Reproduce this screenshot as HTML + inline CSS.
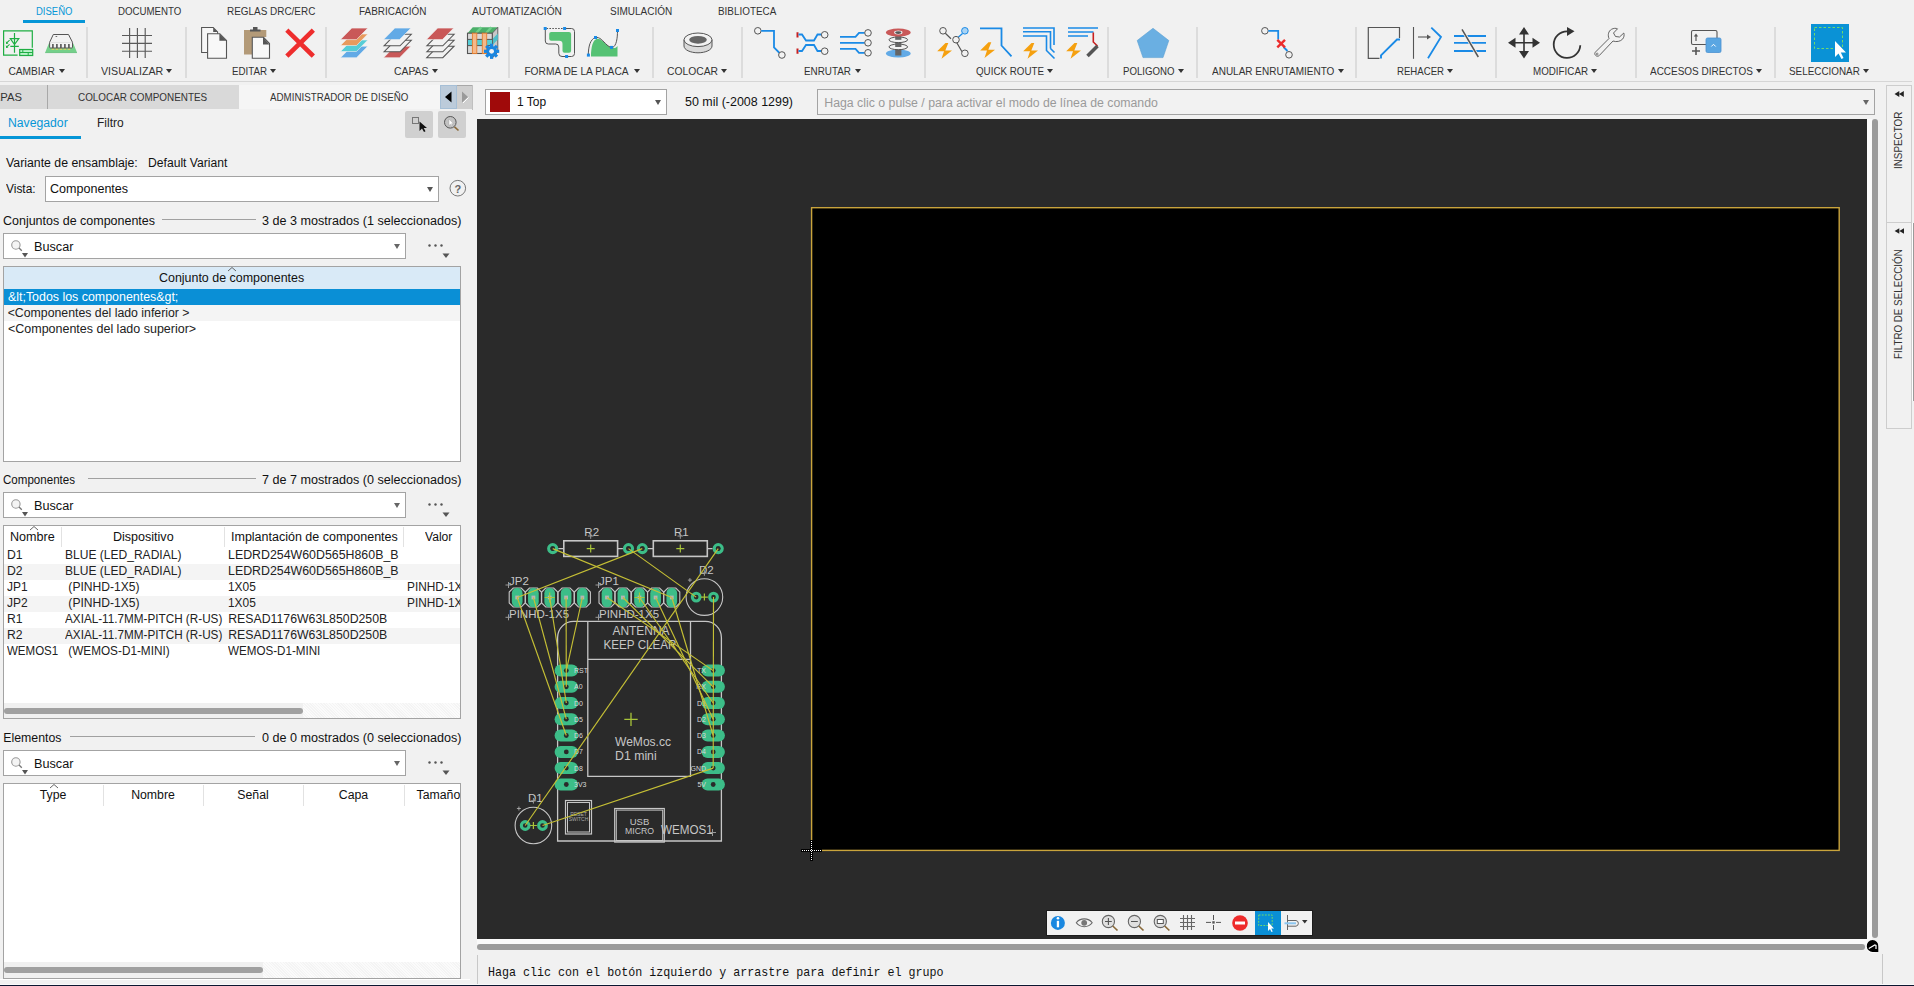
<!DOCTYPE html>
<html><head><meta charset="utf-8">
<style>
*{margin:0;padding:0;box-sizing:border-box}
html,body{width:1914px;height:986px;overflow:hidden;background:#f1f1f1;font-family:"Liberation Sans",sans-serif;color:#222;position:relative}
.a{position:absolute}
.t{position:absolute;white-space:pre;line-height:1}
.tri{position:absolute;width:0;height:0;border-left:3px solid transparent;border-right:3px solid transparent;border-top:4px solid #333}
.sep{position:absolute;top:27px;width:2px;height:51px;background:#dcdcdc}
.box{position:absolute;background:#fff;border:1px solid #a3a3a3}
</style></head><body>

<div class="t" style="left:35.50px;top:6.54px;font-size:10px;color:#0696d7;transform:scaleX(0.9494);transform-origin:0 0;">DISEÑO</div>
<div class="a" style="left:23px;top:20px;width:62px;height:3px;background:#0696d7"></div>
<div class="t" style="left:118.00px;top:6.54px;font-size:10px;color:#333;transform:scaleX(0.9683);transform-origin:0 0;">DOCUMENTO</div>
<div class="t" style="left:226.50px;top:6.54px;font-size:10px;color:#333;transform:scaleX(0.9932);transform-origin:0 0;">REGLAS DRC/ERC</div>
<div class="t" style="left:359.00px;top:6.54px;font-size:10px;color:#333;transform:scaleX(0.9943);transform-origin:0 0;">FABRICACIÓN</div>
<div class="t" style="left:472.40px;top:6.54px;font-size:10px;color:#333;transform:scaleX(1.0156);transform-origin:0 0;">AUTOMATIZACIÓN</div>
<div class="t" style="left:610.00px;top:6.54px;font-size:10px;color:#333;">SIMULACIÓN</div>
<div class="t" style="left:718.30px;top:6.54px;font-size:10px;color:#333;transform:scaleX(0.9897);transform-origin:0 0;">BIBLIOTECA</div>
<div class="sep" style="left:86px"></div>
<div class="sep" style="left:185px"></div>
<div class="sep" style="left:325px"></div>
<div class="sep" style="left:508px"></div>
<div class="sep" style="left:652px"></div>
<div class="sep" style="left:741px"></div>
<div class="sep" style="left:924px"></div>
<div class="sep" style="left:1107px"></div>
<div class="sep" style="left:1196px"></div>
<div class="sep" style="left:1355px"></div>
<div class="sep" style="left:1495px"></div>
<div class="sep" style="left:1635px"></div>
<div class="sep" style="left:1774px"></div>
<div class="t" style="left:8.40px;top:67.07px;font-size:10.2px;color:#333;">CAMBIAR</div>
<div class="tri" style="left:58.5px;top:69px"></div>
<div class="t" style="left:100.80px;top:67.07px;font-size:10.2px;color:#333;transform:scaleX(1.0464);transform-origin:0 0;">VISUALIZAR</div>
<div class="tri" style="left:166.0px;top:69px"></div>
<div class="t" style="left:232.00px;top:67.07px;font-size:10.2px;color:#333;transform:scaleX(0.9563);transform-origin:0 0;">EDITAR</div>
<div class="tri" style="left:270.0px;top:69px"></div>
<div class="t" style="left:393.50px;top:67.07px;font-size:10.2px;color:#333;transform:scaleX(1.0213);transform-origin:0 0;">CAPAS</div>
<div class="tri" style="left:432.0px;top:69px"></div>
<div class="t" style="left:524.40px;top:67.07px;font-size:10.2px;color:#333;">FORMA DE LA PLACA</div>
<div class="tri" style="left:634.0px;top:69px"></div>
<div class="t" style="left:667.00px;top:67.07px;font-size:10.2px;color:#333;transform:scaleX(1.0123);transform-origin:0 0;">COLOCAR</div>
<div class="tri" style="left:721.0px;top:69px"></div>
<div class="t" style="left:804.00px;top:67.07px;font-size:10.2px;color:#333;transform:scaleX(0.9694);transform-origin:0 0;">ENRUTAR</div>
<div class="tri" style="left:854.5px;top:69px"></div>
<div class="t" style="left:976.00px;top:67.07px;font-size:10.2px;color:#333;transform:scaleX(0.9611);transform-origin:0 0;">QUICK ROUTE</div>
<div class="tri" style="left:1047.0px;top:69px"></div>
<div class="t" style="left:1122.50px;top:67.07px;font-size:10.2px;color:#333;transform:scaleX(0.9477);transform-origin:0 0;">POLIGONO</div>
<div class="tri" style="left:1178.0px;top:69px"></div>
<div class="t" style="left:1212.00px;top:67.07px;font-size:10.2px;color:#333;transform:scaleX(0.9814);transform-origin:0 0;">ANULAR ENRUTAMIENTO</div>
<div class="tri" style="left:1338.0px;top:69px"></div>
<div class="t" style="left:1396.60px;top:67.07px;font-size:10.2px;color:#333;transform:scaleX(0.9435);transform-origin:0 0;">REHACER</div>
<div class="tri" style="left:1447.0px;top:69px"></div>
<div class="t" style="left:1533.00px;top:67.07px;font-size:10.2px;color:#333;transform:scaleX(0.9622);transform-origin:0 0;">MODIFICAR</div>
<div class="tri" style="left:1591.0px;top:69px"></div>
<div class="t" style="left:1649.80px;top:67.07px;font-size:10.2px;color:#333;transform:scaleX(0.9781);transform-origin:0 0;">ACCESOS DIRECTOS</div>
<div class="tri" style="left:1756.4px;top:69px"></div>
<div class="t" style="left:1789.20px;top:67.07px;font-size:10.2px;color:#333;transform:scaleX(0.9695);transform-origin:0 0;">SELECCIONAR</div>
<div class="tri" style="left:1863.0px;top:69px"></div>
<svg class="a" style="left:0;top:0" width="1914" height="82" viewBox="0 0 1914 82">
<!-- CAMBIAR: schematic -->
<g fill="none" stroke="#1fae43" stroke-width="1.2">
<path d="M17.6 55.2H3.6V30.9H32.3V47.8"/>
<path d="M14.5 33V52.8M10.3 46.4H18.8M10.3 38.6H18.8L14.5 44.5Z"/>
</g>
<path d="M6.2 43.3L9.6 40.2M6.2 47.4L9.6 44.3" stroke="#1fae43" stroke-width="1.1"/>
<path d="M5.8 41.2L6.2 44L8.5 43.5ZM5.8 45.3L6.2 48.1L8.5 47.6Z" fill="#1fae43"/>
<rect x="19.7" y="49.5" width="13" height="6" fill="#b9f2c9" stroke="#1fae43" stroke-width="1.2"/>
<path d="M19.7 52.5H32.7M22.8 49.5V52.5M28.2 52.5V55.5" stroke="#1fae43" stroke-width="1"/>
<!-- chip on board -->
<path d="M45.2 52.5L48.8 43.5H73.3L77 52.5Z" fill="#74d08a"/>
<path d="M45.2 52.6H77" stroke="#5bbd73" stroke-width="0.8"/>
<path d="M49.6 47.2V42.3L53.3 34.5H68.5L72.5 42.3V47.2Q72.5 48 71.5 48H50.6Q49.6 48 49.6 47.2Z" fill="#f2f2f2" stroke="#555" stroke-width="1"/>
<path d="M50.2 42.5H72" stroke="#e0e0e0" stroke-width="1"/>
<path d="M52.9 44V48.4M56.9 44V48.4M60.9 44V48.4M64.9 44V48.4M68.9 44V48.4" stroke="#555" stroke-width="1.6"/>
<path d="M51.6 49.2H54.2M55.6 49.2H58.2M59.6 49.2H62.2M63.6 49.2H66.2M67.6 49.2H70.2" stroke="#f2d35a" stroke-width="1"/>
<ellipse cx="56.4" cy="36.5" rx="1" ry="0.5" fill="#666"/>
<!-- grid -->
<path d="M129.6 28V58M137.4 28V58M145.2 28V58M122 35.5H152M122 43.4H152M122 51.2H152" stroke="#5a5a5a" stroke-width="1.15"/>
<!-- copy -->
<path d="M201.6 52.5V27.5H213.2L217.6 31.9V52.5Z" fill="#f7f7f7" stroke="#555" stroke-width="1.05"/>
<path d="M213.2 27.5L217.6 31.9H213.2Z" fill="#555"/>
<path d="M207.6 58.3V33.7H219.8L226.5 40.4V58.3Z" fill="#f8f8f8" stroke="#555" stroke-width="1.1"/>
<path d="M219.4 33.7L226.5 40.8H219.4Z" fill="#555"/>
<!-- paste -->
<path d="M244 30H266.3V37H252V54.5H244Z" fill="#b39a78"/>
<path d="M250 31.5H260.5V29.5H257.5V27H253V29.5H250Z" fill="#555"/>
<path d="M252.3 58.3V37.3H263.5L269.5 43.5V58.3Z" fill="#f8f8f8" stroke="#555" stroke-width="1.1"/>
<path d="M263 37.3L269.5 44.5H263Z" fill="#555"/>
<!-- red X -->
<path d="M288.5 31.8L311.7 54.5M311.7 31.8L288.5 54.5" stroke="#ee2d2d" stroke-width="4.6" stroke-linecap="square"/>
<!-- layers 1 -->
<path d="M340.5 57.7L351.8 46.2H367.8L356.5 57.7Z" fill="#62aae6" stroke="#f2f2f2" stroke-width="0.6"/><path d="M340.5 51.5L351.8 40.0H367.8L356.5 51.5Z" fill="#56cdd6" stroke="#f2f2f2" stroke-width="0.6"/><path d="M340.5 45.5L351.8 34.0H367.8L356.5 45.5Z" fill="#e89a5e" stroke="#f2f2f2" stroke-width="0.6"/><path d="M340.5 39.6L351.8 28.1H367.8L356.5 39.6Z" fill="#c95858" stroke="#f2f2f2" stroke-width="0.6"/>
<!-- layers 2 -->
<path d="M383.6 57.7L394.9 46.2H410.9L399.6 57.7Z" fill="#c95858" stroke="#f2f2f2" stroke-width="0.6"/><path d="M384.0 51.8L395.3 40.3H411.3L400.0 51.8Z" fill="#f2f2f2" stroke="#555" stroke-width="1.05" stroke-linejoin="miter"/><path d="M384.0 45.8L395.3 34.3H411.3L400.0 45.8Z" fill="#f2f2f2" stroke="#555" stroke-width="1.05" stroke-linejoin="miter"/><path d="M383.6 39.6L394.9 28.1H410.9L399.6 39.6Z" fill="#62aae6" stroke="#f2f2f2" stroke-width="0.6"/>
<!-- layers 3 -->
<path d="M426.8 57.7L438.1 46.2H454.1L442.8 57.7Z" fill="#f2f2f2" stroke="#555" stroke-width="1.05" stroke-linejoin="miter"/><path d="M426.8 51.8L438.1 40.3H454.1L442.8 51.8Z" fill="#f2f2f2" stroke="#555" stroke-width="1.05" stroke-linejoin="miter"/><path d="M426.8 45.8L438.1 34.3H454.1L442.8 45.8Z" fill="#f2f2f2" stroke="#555" stroke-width="1.05" stroke-linejoin="miter"/><path d="M426.4 39.6L437.7 28.1H453.7L442.4 39.6Z" fill="#c95858" stroke="#f2f2f2" stroke-width="0.6"/>
<!-- layer settings table -->
<path d="M467.5 33.2L472.8 27.3H497.8L492.3 33.2Z" fill="#4caf6a"/>
<path d="M476 33.2l5.3-5.9M486 33.2l5.3-5.9" stroke="#6fd08a" stroke-width="2.4"/>
<path d="M492.3 33.2L497.8 27.3V52L492.3 58Z" fill="#c8c8c8" stroke="#555" stroke-width="0.9"/>
<path d="M492.3 39.3l5.5-5.9v6.1l-5.5 5.9Z" fill="#4fbfca"/>
<rect x="467.5" y="33.2" width="24.8" height="20.3" fill="#d9d9d9" stroke="#555" stroke-width="1.1"/>
<rect x="468" y="39.4" width="24" height="6.2" fill="#56cdd6"/>
<path d="M467.5 39.4H492.3M467.5 45.6H492.3" stroke="#555" stroke-width="1"/>
<rect x="472.4" y="33.2" width="4.4" height="20.3" fill="#f5b98a" stroke="#e67e2e" stroke-width="0.9"/>
<rect x="482.3" y="33.2" width="4.4" height="20.3" fill="#f5b98a" stroke="#e67e2e" stroke-width="0.9"/>
<g transform="translate(491.6 51.3)" fill="#1a86e0">
<circle r="5.3"/>
<rect x="-1.6" y="-7.6" width="3.2" height="15.2"/><rect x="-7.6" y="-1.6" width="15.2" height="3.2"/>
<rect x="-1.6" y="-7.6" width="3.2" height="15.2" transform="rotate(45)"/><rect x="-7.6" y="-1.6" width="15.2" height="3.2" transform="rotate(45)"/>
<circle r="2.4" fill="#f2f2f2"/>
</g>
<!-- board shape -->
<path d="M549.2 34Q549.2 31.9 551.3 31.9H569Q571.1 31.9 571.1 34V50.7Q571.1 52.8 569 52.8H564.6Q562.5 52.8 562.5 50.7V44Q562.5 40.8 559.3 40.8H551.3Q549.2 40.8 549.2 38.7Z" fill="#55c274"/>
<path d="M564.6 28.5H571.5Q574.5 28.5 574.5 31.5V53.5Q574.5 56.5 571.5 56.5H562Q558.8 56.5 558.8 53.3V47Q558.8 44 555.8 44H548.3Q545.3 44 545.3 41V28.5" fill="none" stroke="#555" stroke-width="1"/>
<path d="M546.5 28.5H564" stroke="#555" stroke-width="1" stroke-dasharray="1.6 1.3"/>
<rect x="543.7" y="27" width="3" height="3" fill="#1a8ae6"/><rect x="563.1" y="27" width="3" height="3" fill="#1a8ae6"/><rect x="565.1" y="55" width="3" height="3" fill="#1a8ae6"/>
<!-- curve -->
<path d="M591 56.5C591 47 593 40 596.5 39C600 38 603.5 42 607 45C609.5 47 612 48 614.5 48C616 48 617.5 46 617.5 46V56.5Z" fill="#55c274"/>
<path d="M588.3 55.5C588.3 46 590.5 39 595.5 37.5C599.5 36.5 603 41 607 45C609.5 47 611.5 48 612.5 47.5C616.5 46 617.5 38 617.5 30.5" fill="none" stroke="#555" stroke-width="1"/>
<rect x="586.9" y="53.6" width="3" height="3" fill="#1a8ae6"/><rect x="594" y="36" width="3" height="3" fill="#1a8ae6"/><rect x="610" y="45.9" width="3" height="3" fill="#1a8ae6"/><rect x="616" y="29" width="3" height="3" fill="#1a8ae6"/>
<!-- via -->
<path d="M684 39.8V46C684 49.8 690.3 52.8 698 52.8S712 49.8 712 46V39.8Z" fill="#dadada" stroke="#555" stroke-width="1"/>
<ellipse cx="698" cy="39.8" rx="14" ry="6.8" fill="#f2f2f2" stroke="#555" stroke-width="1"/>
<ellipse cx="698" cy="39.8" rx="8.8" ry="3.9" fill="#666"/>
<!-- route -->
<circle cx="757.8" cy="30.8" r="3.3" fill="#f2f2f2" stroke="#555" stroke-width="1"/>
<path d="M761.2 30.8H774V47.5L780 53.5" fill="none" stroke="#1a8ae6" stroke-width="1.8"/>
<circle cx="781.9" cy="55" r="3.3" fill="#f2f2f2" stroke="#555" stroke-width="1"/>
<!-- diff pair -->
<path d="M797.5 32.3V37.5M797.5 48.5V53.8" stroke="#c82020" stroke-width="2"/>
<path d="M798.5 34.5H802L806 40.5H814L817.5 34.5H821.5M798.5 51H802L806 45H814L817.5 51H821.5" fill="none" stroke="#1a8ae6" stroke-width="1.8"/>
<circle cx="824.7" cy="34.8" r="3.3" fill="#f2f2f2" stroke="#555" stroke-width="1"/>
<circle cx="824.7" cy="51.2" r="3.3" fill="#f2f2f2" stroke="#555" stroke-width="1"/>
<!-- bus -->
<path d="M840 36.8H855.5L859 32.9H864.7M840 42.8H864.7M840 48.8H855.5L859 52.8H864.7" fill="none" stroke="#1a8ae6" stroke-width="1.8"/>
<circle cx="868" cy="32.9" r="3.3" fill="#f2f2f2" stroke="#555" stroke-width="1"/>
<circle cx="868" cy="42.8" r="3.3" fill="#f2f2f2" stroke="#555" stroke-width="1"/>
<circle cx="868" cy="52.8" r="3.3" fill="#f2f2f2" stroke="#555" stroke-width="1"/>
<!-- via stack -->
<ellipse cx="898.3" cy="53.5" rx="12.4" ry="4" fill="#62aae6"/>
<rect x="895.2" y="47" width="6.2" height="8.5" fill="#666"/>
<ellipse cx="898.3" cy="46.9" rx="9.3" ry="2.8" fill="#f2f2f2" stroke="#555" stroke-width="1"/>
<rect x="895.2" y="39.8" width="6.2" height="7.2" fill="#666"/>
<ellipse cx="898.3" cy="39.8" rx="9.3" ry="2.8" fill="#f2f2f2" stroke="#555" stroke-width="1"/>
<rect x="895.2" y="33" width="6.2" height="6.8" fill="#666"/>
<ellipse cx="898.3" cy="32.5" rx="12.4" ry="4" fill="#c95858"/>
<ellipse cx="898.3" cy="32.5" rx="4.2" ry="1.9" fill="#f2f2f2"/>
<ellipse cx="898.3" cy="32.6" rx="3.1" ry="1.3" fill="#555"/>
<!-- QR icons -->
<g id="bolt"><path d="M945.5 43L937.2 51.3H944L941.5 58.8L952 50.5H945.3L948.3 43Z" fill="#f5a00f"/></g>
<path d="M943 31l8 7.7M955.5 40.5l6.5 11.3" stroke="#555" stroke-width="1.2"/>
<path d="M958 37.5l4.5-4" stroke="#1a8ae6" stroke-width="1.4"/>
<circle cx="943" cy="30.8" r="3.3" fill="#f2f2f2" stroke="#555" stroke-width="1"/>
<circle cx="964.9" cy="30.8" r="3.3" fill="#a9d4f5" stroke="#1a8ae6" stroke-width="1"/>
<circle cx="956" cy="39.7" r="3.3" fill="#f2f2f2" stroke="#555" stroke-width="1"/>
<circle cx="964.9" cy="53.3" r="3.3" fill="#f2f2f2" stroke="#555" stroke-width="1"/>
<path d="M988.5 42.3L980.2 50.6H987L984.5 58L995 49.7H988.3L991.3 42.3Z" fill="#f5a00f"/>
<path d="M980 28.3H1001.5V45.5L1011.5 56.3" fill="none" stroke="#1a8ae6" stroke-width="1.8"/>
<path d="M1031.5 43L1023.2 51.3H1030L1027.5 58.8L1038 50.5H1031.3L1034.3 43Z" fill="#f5a00f"/>
<path d="M1023 28H1054V45M1023 31.8H1050.5V48.5M1023 36H1046.5V50.5L1054.5 58.5M1050.5 48.5L1054.5 52.5" fill="none" stroke="#1a8ae6" stroke-width="1.6"/>
<path d="M1074.5 43L1066.2 51.3H1073L1070.5 58.8L1081 50.5H1074.3L1077.3 43Z" fill="#f5a00f"/>
<path d="M1068 28H1098M1068 32H1093.5M1068 36H1088" fill="none" stroke="#1a8ae6" stroke-width="1.6"/>
<path d="M1093.3 32.5V42L1097.5 46" fill="none" stroke="#c82020" stroke-width="1.6"/>
<path d="M1097.5 46L1087.5 56" stroke="#555" stroke-width="3.6"/>
<!-- pentagon -->
<path d="M1153 28.3L1168.8 40.5L1163 57.6H1143L1137.2 40.5Z" fill="#6aafe2" stroke="#5a9fd2" stroke-width="0.6"/>
<!-- unroute -->
<circle cx="1264.9" cy="30.8" r="3.3" fill="#f2f2f2" stroke="#555" stroke-width="1"/>
<path d="M1268.3 30.8H1278.2V39.5M1283.5 47l4 4" fill="none" stroke="#1a8ae6" stroke-width="1.8"/>
<path d="M1277.3 39.8L1285 47.4M1285 39.8L1277.3 47.4" stroke="#ec2b2b" stroke-width="2.4"/>
<circle cx="1289" cy="54.8" r="3.3" fill="#f2f2f2" stroke="#555" stroke-width="1"/>
<!-- miter -->
<path d="M1379.5 58.3H1368.3V27.5H1399.5V38" fill="none" stroke="#555" stroke-width="1.2"/>
<path d="M1400 39.5H1397L1381 55.3V58.6" fill="none" stroke="#1a8ae6" stroke-width="1.9"/>
<!-- split -->
<path d="M1413.5 27V58.8" stroke="#555" stroke-width="1.1"/>
<path d="M1418 37H1428" stroke="#555" stroke-width="1.1"/><path d="M1427 34.5L1431 37L1427 39.5Z" fill="#555"/>
<path d="M1431.3 27.7L1441 37L1428 58.2" fill="none" stroke="#1a8ae6" stroke-width="1.8"/>
<!-- optimize -->
<path d="M1454 36H1486M1454 42.8H1486M1454 51H1486" stroke="#1a8ae6" stroke-width="1.8"/>
<path d="M1462 29.3L1478.3 57" stroke="#f2f2f2" stroke-width="3.2"/>
<path d="M1462 29.3L1478.3 57" stroke="#555" stroke-width="1.5"/>
<!-- move -->
<path d="M1524 31V55M1512 42.8H1536" stroke="#333" stroke-width="1.6"/>
<path d="M1524 27L1529 34.5H1519ZM1524 58.5L1529 51H1519ZM1508 42.8L1515.5 37.8V47.8ZM1540 42.8L1532.5 37.8V47.8Z" fill="#333"/>
<!-- rotate -->
<path d="M1580.3 45.3A13.3 13.3 0 1 1 1567 31.3" fill="none" stroke="#333" stroke-width="1.8"/>
<path d="M1567 27L1574.5 31.3L1567 36Z" fill="#333"/>
<!-- wrench -->
<path d="M1595.5 55.3C1594.5 54.3 1594.5 53 1595.5 52L1609 38.5C1607.5 35 1608.5 31 1611.5 29.3C1613.5 28.2 1616 28 1617.5 28.8L1613.5 33L1615.5 36.5L1619.5 37L1623.8 33C1624.5 35 1624 37.5 1622.5 39.2C1620.5 41.3 1616.5 42.3 1613 41L1599.3 55.5C1598.3 56.5 1596.5 56.5 1595.5 55.3Z" fill="#f2f2f2" stroke="#555" stroke-width="0.9"/>
<circle cx="1597.2" cy="54" r="0.9" fill="none" stroke="#555" stroke-width="0.7"/>
<!-- shortcuts -->
<rect x="1691.5" y="30.5" width="25.5" height="14" rx="1.5" fill="none" stroke="#555" stroke-width="1.1"/>
<path d="M1696 41V35" stroke="#555" stroke-width="1.2"/><path d="M1693.8 36.5L1696 33.5L1698.2 36.5Z" fill="#555"/>
<path d="M1696 47V55M1692 51H1700" stroke="#555" stroke-width="1.6"/>
<rect x="1706" y="38" width="15" height="14.5" rx="1.5" fill="#5aa6e2" stroke="#4a90d0" stroke-width="0.8"/>
<path d="M1711.3 46.5L1713.5 44.3L1715.7 46.5" fill="none" stroke="#fff" stroke-width="1"/>
<!-- select button -->
<rect x="1811" y="24" width="38" height="38" fill="#0a92d6"/>
<rect x="1814.5" y="27.5" width="28" height="21" fill="none" stroke="#6fdc6a" stroke-width="1" stroke-dasharray="2.5 2"/>
<path d="M1835 41V57L1838.5 53.5L1841.5 59L1843.5 58L1840.8 52.5H1846Z" fill="#fff"/>
</svg>

<div class="a" style="left:0;top:81px;width:1912px;height:1px;background:#d6d6d6"></div>
<div class="a" style="left:239px;top:85px;width:201px;height:24px;background:#f5f5f5"></div>
<div class="a" style="left:0;top:85px;width:47px;height:24px;background:#d9d9d9"></div>
<div class="a" style="left:47px;top:85px;width:1px;height:24px;background:#a8a8a8"></div>
<div class="a" style="left:48px;top:85px;width:191px;height:24px;background:#d9d9d9"></div>
<div class="t" style="left:-6.00px;top:92.70px;font-size:10.4px;color:#333;transform:scaleX(1.0853);transform-origin:0 0;">LPAS</div>
<div class="t" style="left:77.50px;top:92.70px;font-size:10.4px;color:#333;transform:scaleX(0.9523);transform-origin:0 0;">COLOCAR COMPONENTES</div>
<div class="t" style="left:269.70px;top:92.70px;font-size:10.4px;color:#333;transform:scaleX(0.9394);transform-origin:0 0;">ADMINISTRADOR DE DISEÑO</div>
<div class="a" style="left:440px;top:85px;width:17px;height:24px;background:#bccbda;border:1px solid #a6bfd6"></div>
<div class="a" style="left:457px;top:85px;width:15px;height:24px;background:#cfcfcf;border-top:1px solid #a8a8a8"></div>
<div class="a" style="left:472px;top:85px;width:1px;height:25px;background:#c0c0c0"></div>
<svg class="a" style="left:440px;top:85px" width="33" height="25" viewBox="440 85 33 25"><path d="M445 97L451.5 91.5V102.5Z" fill="#000"/><path d="M462 91.5L468 97L462 102.5Z" fill="#9a9a9a"/><path d="M463 103L468.5 97.5" stroke="#fff" stroke-width="1"/></svg>
<div class="t" style="left:8.20px;top:116.59px;font-size:12.3px;color:#0696d7;transform:scaleX(0.9924);transform-origin:0 0;">Navegador</div>
<div class="a" style="left:0;top:136px;width:81px;height:3px;background:#0696d7"></div>
<div class="t" style="left:97.20px;top:116.59px;font-size:12.3px;color:#222;transform:scaleX(0.9734);transform-origin:0 0;">Filtro</div>
<div class="a" style="left:405px;top:111px;width:28px;height:27px;background:#d0d0d0;border-radius:2px"></div>
<div class="a" style="left:438px;top:111px;width:28px;height:27px;background:#d0d0d0;border-radius:2px"></div>
<svg class="a" style="left:405px;top:111px" width="62" height="28" viewBox="405 111 62 28">
<rect x="412.5" y="117.5" width="6" height="6" fill="none" stroke="#777" stroke-width="1"/>
<path d="M419.5 121.5V131L422 128.5L424 132L425.5 131.3L423.7 128H427Z" fill="#111"/>
<circle cx="450.3" cy="122.3" r="5.8" fill="#c2c2c2" stroke="#555" stroke-width="1"/>
<path d="M449 119V125.5L450.5 124.2L451.5 126L452.3 125.6L451.5 123.8H453.5Z" fill="#fff" stroke="#999" stroke-width="0.4"/>
<path d="M454.5 126.8L458.5 130.5" stroke="#8a6a3a" stroke-width="1.6"/>
</svg>
<div class="t" style="left:6.00px;top:156.59px;font-size:12.3px;color:#111;">Variante de ensamblaje:</div>
<div class="t" style="left:147.90px;top:156.59px;font-size:12.3px;color:#111;transform:scaleX(0.9872);transform-origin:0 0;">Default Variant</div>
<div class="t" style="left:6.00px;top:182.99px;font-size:12.3px;color:#111;transform:scaleX(0.9695);transform-origin:0 0;">Vista:</div>
<div class="box" style="left:45px;top:176px;width:394px;height:26px"></div>
<div class="t" style="left:50.10px;top:183.19px;font-size:12.3px;color:#111;transform:scaleX(1.0201);transform-origin:0 0;">Componentes</div>
<div class="tri" style="left:427px;top:187px;border-top-color:#555;border-top-width:5px"></div>
<svg class="a" style="left:448px;top:178px" width="20" height="20" viewBox="448 178 20 20"><circle cx="457.8" cy="188.2" r="7.8" fill="none" stroke="#777" stroke-width="1"/><text x="457.8" y="192.8" font-family="Liberation Sans" font-weight="bold" font-size="11" fill="#666" text-anchor="middle">?</text></svg>
<div class="t" style="left:3.30px;top:215.39px;font-size:12.3px;color:#111;transform:scaleX(1.0153);transform-origin:0 0;">Conjuntos de componentes</div>
<div class="a" style="left:162px;top:219.1px;width:94px;height:1px;background:#a0a0a0"></div>
<div class="t" style="left:262.00px;top:215.39px;font-size:12.3px;color:#111;transform:scaleX(1.0236);transform-origin:0 0;">3 de 3 mostrados (1 seleccionados)</div>
<div class="box" style="left:3px;top:233px;width:403px;height:26px"></div>
<svg class="a" style="left:8px;top:233px" width="20" height="26" viewBox="8 233 20 26"><circle cx="15.9" cy="245" r="4.2" fill="#f4f4f4" stroke="#999" stroke-width="1.1"/><path d="M19 248L21.8 250.8" stroke="#777" stroke-width="1.3"/><path d="M22 253H28L25 257.6Z" fill="#555"/></svg>
<div class="t" style="left:33.70px;top:241.29px;font-size:12.3px;color:#111;transform:scaleX(1.0295);transform-origin:0 0;">Buscar</div>
<div class="tri" style="left:394px;top:243.5px;border-top-color:#666;border-top-width:5px"></div>
<svg class="a" style="left:426px;top:242px" width="26" height="18" viewBox="426 242 26 18"><circle cx="429.5" cy="245.5" r="1.2" fill="#555"/><circle cx="435.5" cy="245.5" r="1.2" fill="#555"/><circle cx="441.5" cy="245.5" r="1.2" fill="#555"/><path d="M442.5 253.5H449.5L446 258Z" fill="#555"/></svg>
<div class="box" style="left:3px;top:266px;width:458px;height:196px"></div>
<div class="a" style="left:4px;top:267px;width:456px;height:22px;background:#d9eaf7"></div>
<svg class="a" style="left:226px;top:266px" width="12" height="6" viewBox="226 266 12 6"><path d="M228 271L232 267.5L236 271" fill="none" stroke="#555" stroke-width="0.9"/></svg>
<div class="t" style="left:158.80px;top:271.59px;font-size:12.3px;color:#111;transform:scaleX(1.0114);transform-origin:0 0;">Conjunto de componentes</div>
<div class="a" style="left:4px;top:289px;width:456px;height:16px;background:#0a8fd6"></div>
<div class="t" style="left:7.70px;top:290.99px;font-size:12.3px;color:#fff;transform:scaleX(1.0087);transform-origin:0 0;">&amp;lt;Todos los componentes&amp;gt;</div>
<div class="a" style="left:4px;top:305px;width:456px;height:16px;background:#f4f4f4"></div>
<div class="t" style="left:7.70px;top:307.19px;font-size:12.3px;color:#222;">&lt;Componentes del lado inferior &gt;</div>
<div class="t" style="left:7.70px;top:322.89px;font-size:12.3px;color:#222;transform:scaleX(1.0153);transform-origin:0 0;">&lt;Componentes del lado superior&gt;</div>
<div class="t" style="left:3.30px;top:474.09px;font-size:12.3px;color:#111;transform:scaleX(0.9404);transform-origin:0 0;">Componentes</div>
<div class="a" style="left:88px;top:477.8px;width:168px;height:1px;background:#a0a0a0"></div>
<div class="t" style="left:262.00px;top:474.09px;font-size:12.3px;color:#111;transform:scaleX(1.0236);transform-origin:0 0;">7 de 7 mostrados (0 seleccionados)</div>
<div class="box" style="left:3px;top:492px;width:403px;height:26px"></div>
<svg class="a" style="left:8px;top:492px" width="20" height="26" viewBox="8 492 20 26"><circle cx="15.9" cy="504" r="4.2" fill="#f4f4f4" stroke="#999" stroke-width="1.1"/><path d="M19 507L21.8 509.8" stroke="#777" stroke-width="1.3"/><path d="M22 512H28L25 516.6Z" fill="#555"/></svg>
<div class="t" style="left:33.70px;top:500.29px;font-size:12.3px;color:#111;transform:scaleX(1.0295);transform-origin:0 0;">Buscar</div>
<div class="tri" style="left:394px;top:502.5px;border-top-color:#666;border-top-width:5px"></div>
<svg class="a" style="left:426px;top:501px" width="26" height="18" viewBox="426 501 26 18"><circle cx="429.5" cy="504.5" r="1.2" fill="#555"/><circle cx="435.5" cy="504.5" r="1.2" fill="#555"/><circle cx="441.5" cy="504.5" r="1.2" fill="#555"/><path d="M442.5 512.5H449.5L446 517Z" fill="#555"/></svg>
<div class="box" style="left:3px;top:525px;width:458px;height:194px"></div>
<div class="a" style="left:61px;top:527px;width:1px;height:20px;background:#e2e2e2"></div>
<div class="a" style="left:224px;top:527px;width:1px;height:20px;background:#e2e2e2"></div>
<div class="a" style="left:403px;top:527px;width:1px;height:20px;background:#e2e2e2"></div>
<svg class="a" style="left:28px;top:525px" width="12" height="6" viewBox="28 525 12 6"><path d="M30 530L34 526.5L38 530" fill="none" stroke="#555" stroke-width="0.9"/></svg>
<div class="t" style="left:10.00px;top:530.89px;font-size:12.3px;color:#111;transform:scaleX(1.0221);transform-origin:0 0;">Nombre</div>
<div class="t" style="left:112.90px;top:530.89px;font-size:12.3px;color:#111;transform:scaleX(1.0193);transform-origin:0 0;">Dispositivo</div>
<div class="t" style="left:230.70px;top:530.89px;font-size:12.3px;color:#111;transform:scaleX(1.0167);transform-origin:0 0;">Implantación de componentes</div>
<div class="t" style="left:424.60px;top:530.89px;font-size:12.3px;color:#111;transform:scaleX(0.9858);transform-origin:0 0;">Valor</div>
<div class="t" style="left:7.00px;top:548.59px;font-size:12.3px;color:#222;transform:scaleX(0.9924);transform-origin:0 0;">D1</div>
<div class="t" style="left:64.70px;top:548.59px;font-size:12.3px;color:#222;transform:scaleX(0.9789);transform-origin:0 0;">BLUE (LED_RADIAL)</div>
<div class="t" style="left:228.20px;top:548.59px;font-size:12.3px;color:#222;transform:scaleX(1.0058);transform-origin:0 0;">LEDRD254W60D565H860B_B</div>
<div class="a" style="left:4px;top:564px;width:456px;height:16px;background:#f4f4f4"></div>
<div class="t" style="left:7.00px;top:564.59px;font-size:12.3px;color:#222;transform:scaleX(0.9924);transform-origin:0 0;">D2</div>
<div class="t" style="left:64.70px;top:564.59px;font-size:12.3px;color:#222;transform:scaleX(0.9789);transform-origin:0 0;">BLUE (LED_RADIAL)</div>
<div class="t" style="left:228.20px;top:564.59px;font-size:12.3px;color:#222;transform:scaleX(1.0058);transform-origin:0 0;">LEDRD254W60D565H860B_B</div>
<div class="t" style="left:7.00px;top:580.59px;font-size:12.3px;color:#222;transform:scaleX(0.9722);transform-origin:0 0;">JP1</div>
<div class="t" style="left:64.70px;top:580.59px;font-size:12.3px;color:#222;transform:scaleX(0.9823);transform-origin:0 0;"> (PINHD-1X5)</div>
<div class="t" style="left:228.20px;top:580.59px;font-size:12.3px;color:#222;transform:scaleX(0.9680);transform-origin:0 0;">1X05</div>
<div class="a" style="left:406px;top:580px;width:54px;height:16px;overflow:hidden"><div class="t" style="left:0.80px;top:0.59px;font-size:12.3px;color:#222;transform:scaleX(0.9652);transform-origin:0 0;">PINHD-1X5</div></div>
<div class="a" style="left:4px;top:596px;width:456px;height:16px;background:#f4f4f4"></div>
<div class="t" style="left:7.00px;top:596.59px;font-size:12.3px;color:#222;transform:scaleX(0.9722);transform-origin:0 0;">JP2</div>
<div class="t" style="left:64.70px;top:596.59px;font-size:12.3px;color:#222;transform:scaleX(0.9823);transform-origin:0 0;"> (PINHD-1X5)</div>
<div class="t" style="left:228.20px;top:596.59px;font-size:12.3px;color:#222;transform:scaleX(0.9680);transform-origin:0 0;">1X05</div>
<div class="a" style="left:406px;top:596px;width:54px;height:16px;overflow:hidden"><div class="t" style="left:0.80px;top:0.59px;font-size:12.3px;color:#222;transform:scaleX(0.9652);transform-origin:0 0;">PINHD-1X5</div></div>
<div class="t" style="left:7.00px;top:612.59px;font-size:12.3px;color:#222;transform:scaleX(0.9924);transform-origin:0 0;">R1</div>
<div class="t" style="left:64.70px;top:612.59px;font-size:12.3px;color:#222;transform:scaleX(0.9527);transform-origin:0 0;">AXIAL-11.7MM-PITCH (R-US)</div>
<div class="t" style="left:228.20px;top:612.59px;font-size:12.3px;color:#222;">RESAD1176W63L850D250B</div>
<div class="a" style="left:4px;top:628px;width:456px;height:16px;background:#f4f4f4"></div>
<div class="t" style="left:7.00px;top:628.59px;font-size:12.3px;color:#222;transform:scaleX(0.9924);transform-origin:0 0;">R2</div>
<div class="t" style="left:64.70px;top:628.59px;font-size:12.3px;color:#222;transform:scaleX(0.9527);transform-origin:0 0;">AXIAL-11.7MM-PITCH (R-US)</div>
<div class="t" style="left:228.20px;top:628.59px;font-size:12.3px;color:#222;">RESAD1176W63L850D250B</div>
<div class="t" style="left:7.00px;top:644.59px;font-size:12.3px;color:#222;transform:scaleX(0.9367);transform-origin:0 0;">WEMOS1</div>
<div class="t" style="left:64.70px;top:644.59px;font-size:12.3px;color:#222;transform:scaleX(0.9571);transform-origin:0 0;"> (WEMOS-D1-MINI)</div>
<div class="t" style="left:228.20px;top:644.59px;font-size:12.3px;color:#222;transform:scaleX(0.9449);transform-origin:0 0;">WEMOS-D1-MINI</div>
<div class="a" style="left:4px;top:703px;width:456px;height:15px;background:repeating-linear-gradient(45deg,#f4f4f4 0 1px,#fbfbfb 1px 2px)"></div>
<div class="a" style="left:4px;top:703px;width:299px;height:15px;background:#f0f0f0"></div>
<div class="a" style="left:4px;top:707.5px;width:299px;height:6px;background:#a0a0a0;border-radius:3px"></div>
<div class="t" style="left:3.30px;top:731.89px;font-size:12.3px;color:#111;">Elementos</div>
<div class="a" style="left:69.6px;top:735.6px;width:185.4px;height:1px;background:#a0a0a0"></div>
<div class="t" style="left:262.00px;top:731.89px;font-size:12.3px;color:#111;transform:scaleX(1.0236);transform-origin:0 0;">0 de 0 mostrados (0 seleccionados)</div>
<div class="box" style="left:3px;top:750px;width:403px;height:26px"></div>
<svg class="a" style="left:8px;top:750px" width="20" height="26" viewBox="8 750 20 26"><circle cx="15.9" cy="762" r="4.2" fill="#f4f4f4" stroke="#999" stroke-width="1.1"/><path d="M19 765L21.8 767.8" stroke="#777" stroke-width="1.3"/><path d="M22 770H28L25 774.6Z" fill="#555"/></svg>
<div class="t" style="left:33.70px;top:758.29px;font-size:12.3px;color:#111;transform:scaleX(1.0295);transform-origin:0 0;">Buscar</div>
<div class="tri" style="left:394px;top:760.5px;border-top-color:#666;border-top-width:5px"></div>
<svg class="a" style="left:426px;top:759px" width="26" height="18" viewBox="426 759 26 18"><circle cx="429.5" cy="762.5" r="1.2" fill="#555"/><circle cx="435.5" cy="762.5" r="1.2" fill="#555"/><circle cx="441.5" cy="762.5" r="1.2" fill="#555"/><path d="M442.5 770.5H449.5L446 775Z" fill="#555"/></svg>
<div class="box" style="left:3px;top:783px;width:458px;height:196px"></div>
<div class="a" style="left:103px;top:785px;width:1px;height:21px;background:#e2e2e2"></div>
<div class="a" style="left:203px;top:785px;width:1px;height:21px;background:#e2e2e2"></div>
<div class="a" style="left:303px;top:785px;width:1px;height:21px;background:#e2e2e2"></div>
<div class="a" style="left:404px;top:785px;width:1px;height:21px;background:#e2e2e2"></div>
<svg class="a" style="left:48px;top:783px" width="12" height="6" viewBox="48 783 12 6"><path d="M50 788L54 784.5L58 788" fill="none" stroke="#555" stroke-width="0.9"/></svg>
<div class="t" style="left:39.67px;top:789.09px;font-size:12.3px;color:#111;">Type</div>
<div class="t" style="left:131.13px;top:789.09px;font-size:12.3px;color:#111;">Nombre</div>
<div class="t" style="left:237.27px;top:789.09px;font-size:12.3px;color:#111;">Señal</div>
<div class="t" style="left:338.80px;top:789.09px;font-size:12.3px;color:#111;">Capa</div>
<div class="a" style="left:406px;top:785px;width:54px;height:20px;overflow:hidden"><div class="t" style="left:10.50px;top:4.09px;font-size:12.3px;color:#111;">Tamaño</div></div>
<div class="a" style="left:4px;top:962px;width:456px;height:16px;background:repeating-linear-gradient(45deg,#f4f4f4 0 1px,#fbfbfb 1px 2px)"></div>
<div class="a" style="left:4px;top:962px;width:259px;height:16px;background:#f0f0f0"></div>
<div class="a" style="left:4px;top:967px;width:259px;height:6px;background:#a0a0a0;border-radius:3px"></div>
<div class="a" style="left:0;top:979px;width:470px;height:1px;background:#fff"></div>
<div class="box" style="left:485px;top:89px;width:182px;height:26px"></div>
<div class="a" style="left:490px;top:92px;width:20px;height:19.5px;background:#a00a0a"></div>
<div class="t" style="left:516.50px;top:96.09px;font-size:12.3px;color:#111;transform:scaleX(0.9740);transform-origin:0 0;">1 Top</div>
<div class="tri" style="left:654.5px;top:100px;border-top-color:#555;border-left-width:3.2px;border-right-width:3.2px;border-top-width:5px"></div>
<div class="t" style="left:685.00px;top:95.99px;font-size:12.3px;color:#111;transform:scaleX(1.0128);transform-origin:0 0;">50 mil (-2008 1299)</div>
<div class="a" style="left:817px;top:89px;width:1058px;height:26px;border:1px solid #a3a3a3;background:#f2f2f2"></div>
<div class="t" style="left:824.30px;top:96.69px;font-size:12.3px;color:#9a9a9a;">Haga clic o pulse / para activar el modo de línea de comando</div>
<div class="tri" style="left:1863px;top:100px;border-top-color:#666;border-top-width:5px"></div>
<div class="a" style="left:477px;top:119px;width:1390px;height:820px;background:#2a2a2a"></div>
<div class="a" style="left:1867px;top:119px;width:5px;height:825px;background:#fafafa"></div>
<div class="a" style="left:477px;top:939px;width:1395px;height:5px;background:#fafafa"></div>
<div class="a" style="left:1872px;top:119px;width:6px;height:819px;background:#9b9b9b;border-radius:3px"></div>
<div class="a" style="left:477px;top:944px;width:1388px;height:6px;background:#9b9b9b;border-radius:3px"></div>
<svg class="a" style="left:1864px;top:938px" width="17" height="17" viewBox="1864 938 17 17"><circle cx="1872.5" cy="946.3" r="6.6" fill="#fff"/><path d="M1866.8 946.5A5.8 5.8 0 1 1 1878.3 946.5L1878.3 952H1872.5A5.8 5.8 0 0 1 1866.8 946.5Z" fill="#000"/><path d="M1868.8 948.5L1874.8 945L1876 945.5V949" fill="none" stroke="#fff" stroke-width="1.2"/></svg>
<svg class="a" style="left:477px;top:119px" width="1390" height="820" viewBox="477 119 1390 820"><rect x="811.6" y="207.7" width="1027.6" height="642.7" fill="#000" stroke="#c9a43c" stroke-width="1.4"/><rect x="801" y="849" width="21" height="3" fill="#000"/><rect x="810" y="840" width="3" height="21" fill="#000"/><rect x="802" y="850" width="1" height="1" fill="#fff"/><rect x="804" y="850" width="1" height="1" fill="#fff"/><rect x="806" y="850" width="1" height="1" fill="#fff"/><rect x="808" y="850" width="1" height="1" fill="#fff"/><rect x="810" y="850" width="1" height="1" fill="#fff"/><rect x="812" y="850" width="1" height="1" fill="#fff"/><rect x="814" y="850" width="1" height="1" fill="#fff"/><rect x="816" y="850" width="1" height="1" fill="#fff"/><rect x="818" y="850" width="1" height="1" fill="#fff"/><rect x="820" y="850" width="1" height="1" fill="#fff"/><rect x="811" y="841" width="1" height="1" fill="#fff"/><rect x="811" y="843" width="1" height="1" fill="#fff"/><rect x="811" y="845" width="1" height="1" fill="#fff"/><rect x="811" y="847" width="1" height="1" fill="#fff"/><rect x="811" y="849" width="1" height="1" fill="#fff"/><rect x="811" y="851" width="1" height="1" fill="#fff"/><rect x="811" y="853" width="1" height="1" fill="#fff"/><rect x="811" y="855" width="1" height="1" fill="#fff"/><rect x="811" y="857" width="1" height="1" fill="#fff"/><rect x="811" y="859" width="1" height="1" fill="#fff"/><rect x="563.8" y="540.8" width="53.8" height="15.6" fill="none" stroke="#c6c6c6" stroke-width="1.6"/><path d="M558.3000000000001 548.6H563.8M617.6 548.6H622.9" stroke="#c6c6c6" stroke-width="1.2"/><circle cx="552.7" cy="548.6" r="4.00" fill="none" stroke="#3cbd88" stroke-width="3.20"/><circle cx="628.5" cy="548.6" r="4.00" fill="none" stroke="#3cbd88" stroke-width="3.20"/><circle cx="552.7" cy="548.6" r="2.3" fill="#2a2a2a"/><circle cx="628.5" cy="548.6" r="2.3" fill="#2a2a2a"/><path d="M586.7 548.6H594.7M590.7 544.6V552.6" stroke="#a8c43a" stroke-width="1.2"/><text x="591.7" y="536.3" font-family="Liberation Sans" font-size="11.5" fill="#c6c6c6" text-anchor="middle" >R2</text><path d="M587.9000000000001 536H593.5M590.7 533.2V538.8" stroke="#9a9a9a" stroke-width="1"/><rect x="653.3" y="540.8" width="54.0" height="15.6" fill="none" stroke="#c6c6c6" stroke-width="1.6"/><path d="M647.9 548.6H653.3M707.3 548.6H712.6" stroke="#c6c6c6" stroke-width="1.2"/><circle cx="642.3" cy="548.6" r="4.00" fill="none" stroke="#3cbd88" stroke-width="3.20"/><circle cx="718.2" cy="548.6" r="4.00" fill="none" stroke="#3cbd88" stroke-width="3.20"/><circle cx="642.3" cy="548.6" r="2.3" fill="#2a2a2a"/><circle cx="718.2" cy="548.6" r="2.3" fill="#2a2a2a"/><path d="M676.3 548.6H684.3M680.3 544.6V552.6" stroke="#a8c43a" stroke-width="1.2"/><text x="681.3" y="536.3" font-family="Liberation Sans" font-size="11.5" fill="#c6c6c6" text-anchor="middle" >R1</text><path d="M677.5 536H683.0999999999999M680.3 533.2V538.8" stroke="#9a9a9a" stroke-width="1"/><path d="M513.2 588H521.2L525.2 592V603L521.2 607H513.2L509.20000000000005 603V592Z" fill="none" stroke="#c6c6c6" stroke-width="1.1"/><path d="M529.4 588H537.4L541.4 592V603L537.4 607H529.4L525.4 603V592Z" fill="none" stroke="#c6c6c6" stroke-width="1.1"/><path d="M545.7 588H553.7L557.7 592V603L553.7 607H545.7L541.7 603V592Z" fill="none" stroke="#c6c6c6" stroke-width="1.1"/><path d="M562.1 588H570.1L574.1 592V603L570.1 607H562.1L558.1 603V592Z" fill="none" stroke="#c6c6c6" stroke-width="1.1"/><path d="M578.4 588H586.4L590.4 592V603L586.4 607H578.4L574.4 603V592Z" fill="none" stroke="#c6c6c6" stroke-width="1.1"/><rect x="511.85" y="587.8" width="10.7" height="19.4" rx="5.35" fill="#3cbd88"/><rect x="515.3000000000001" y="595.6" width="3.8" height="3.8" fill="#b5b5b5"/><rect x="528.05" y="587.8" width="10.7" height="19.4" rx="5.35" fill="#3cbd88"/><rect x="531.5" y="595.6" width="3.8" height="3.8" fill="#b5b5b5"/><rect x="544.35" y="587.8" width="10.7" height="19.4" rx="5.35" fill="#3cbd88"/><rect x="547.8000000000001" y="595.6" width="3.8" height="3.8" fill="#b5b5b5"/><rect x="560.75" y="587.8" width="10.7" height="19.4" rx="5.35" fill="#3cbd88"/><rect x="564.2" y="595.6" width="3.8" height="3.8" fill="#b5b5b5"/><rect x="577.05" y="587.8" width="10.7" height="19.4" rx="5.35" fill="#3cbd88"/><rect x="580.5" y="595.6" width="3.8" height="3.8" fill="#b5b5b5"/><path d="M544.7 597.5H554.7M549.7 592.5V602.5" stroke="#a8c43a" stroke-width="1.2"/><text x="509" y="585.2" font-family="Liberation Sans" font-size="11.5" fill="#c6c6c6" text-anchor="start" >JP2</text><text x="509" y="617.8" font-family="Liberation Sans" font-size="11.5" fill="#c6c6c6" text-anchor="start" >PINHD-1X5</text><path d="M505.5 585H511.5M508.5 582V588" stroke="#9a9a9a" stroke-width="1"/><path d="M505.5 617.3H511.5M508.5 614.3V620.3" stroke="#9a9a9a" stroke-width="1"/><path d="M603 588H611L615 592V603L611 607H603L599 603V592Z" fill="none" stroke="#c6c6c6" stroke-width="1.1"/><path d="M618.9 588H626.9L630.9 592V603L626.9 607H618.9L614.9 603V592Z" fill="none" stroke="#c6c6c6" stroke-width="1.1"/><path d="M635.5 588H643.5L647.5 592V603L643.5 607H635.5L631.5 603V592Z" fill="none" stroke="#c6c6c6" stroke-width="1.1"/><path d="M651.6 588H659.6L663.6 592V603L659.6 607H651.6L647.6 603V592Z" fill="none" stroke="#c6c6c6" stroke-width="1.1"/><path d="M667.8 588H675.8L679.8 592V603L675.8 607H667.8L663.8 603V592Z" fill="none" stroke="#c6c6c6" stroke-width="1.1"/><rect x="601.65" y="587.8" width="10.7" height="19.4" rx="5.35" fill="#3cbd88"/><rect x="605.1" y="595.6" width="3.8" height="3.8" fill="#b5b5b5"/><rect x="617.55" y="587.8" width="10.7" height="19.4" rx="5.35" fill="#3cbd88"/><rect x="621.0" y="595.6" width="3.8" height="3.8" fill="#b5b5b5"/><rect x="634.15" y="587.8" width="10.7" height="19.4" rx="5.35" fill="#3cbd88"/><rect x="637.6" y="595.6" width="3.8" height="3.8" fill="#b5b5b5"/><rect x="650.25" y="587.8" width="10.7" height="19.4" rx="5.35" fill="#3cbd88"/><rect x="653.7" y="595.6" width="3.8" height="3.8" fill="#b5b5b5"/><rect x="666.4499999999999" y="587.8" width="10.7" height="19.4" rx="5.35" fill="#3cbd88"/><rect x="669.9" y="595.6" width="3.8" height="3.8" fill="#b5b5b5"/><path d="M634.5 597.5H644.5M639.5 592.5V602.5" stroke="#a8c43a" stroke-width="1.2"/><text x="599" y="585.2" font-family="Liberation Sans" font-size="11.5" fill="#c6c6c6" text-anchor="start" >JP1</text><text x="599" y="617.8" font-family="Liberation Sans" font-size="11.5" fill="#c6c6c6" text-anchor="start" >PINHD-1X5</text><path d="M595.5 585H601.5M598.5 582V588" stroke="#9a9a9a" stroke-width="1"/><path d="M595.5 617.3H601.5M598.5 614.3V620.3" stroke="#9a9a9a" stroke-width="1"/><circle cx="704.4" cy="597.1" r="18.3" fill="none" stroke="#c6c6c6" stroke-width="1.1"/><circle cx="696.1999999999999" cy="597.1" r="3.85" fill="none" stroke="#3cbd88" stroke-width="3.10"/><circle cx="713.5" cy="597.1" r="3.85" fill="none" stroke="#3cbd88" stroke-width="3.10"/><path d="M700.9 597.1H707.9M704.4 593.6V600.6" stroke="#a8c43a" stroke-width="1.2"/><text x="706.4" y="574" font-family="Liberation Sans" font-size="11.5" fill="#c6c6c6" text-anchor="middle" >D2</text><path d="M701.6 573H707.1999999999999M704.4 570.2V575.8" stroke="#9a9a9a" stroke-width="1"/><path d="M687.9 580.1h4M689.9 578.1v4" stroke="#aaa" stroke-width="0.9"/><circle cx="533.4" cy="825.5" r="18.3" fill="none" stroke="#c6c6c6" stroke-width="1.1"/><circle cx="525.1999999999999" cy="825.5" r="3.85" fill="none" stroke="#3cbd88" stroke-width="3.10"/><circle cx="542.5" cy="825.5" r="3.85" fill="none" stroke="#3cbd88" stroke-width="3.10"/><path d="M529.9 825.5H536.9M533.4 822.0V829.0" stroke="#a8c43a" stroke-width="1.2"/><text x="535.4" y="801.8" font-family="Liberation Sans" font-size="11.5" fill="#c6c6c6" text-anchor="middle" >D1</text><path d="M530.6 800.8H536.1999999999999M533.4 798.0V803.5999999999999" stroke="#9a9a9a" stroke-width="1"/><path d="M516.9 808.5h4M518.9 806.5v4" stroke="#aaa" stroke-width="0.9"/><path d="M557.6 841V637.4A16 16 0 0 1 573.6 621.4H705.4A16 16 0 0 1 721.4 637.4V841Z" fill="none" stroke="#c6c6c6" stroke-width="1.3"/><path d="M587.8 621.4V776.4H690.5V621.4M587.8 659.3H690.5" fill="none" stroke="#c6c6c6" stroke-width="1.3"/><text x="641" y="635.4" font-family="Liberation Sans" font-size="12.8" fill="#c6c6c6" text-anchor="middle" textLength="57" lengthAdjust="spacingAndGlyphs">ANTENNA</text><text x="640" y="649.4" font-family="Liberation Sans" font-size="12.8" fill="#c6c6c6" text-anchor="middle" textLength="73" lengthAdjust="spacingAndGlyphs">KEEP CLEAR</text><text x="615" y="745.8" font-family="Liberation Sans" font-size="12.5" fill="#c6c6c6" text-anchor="start" textLength="56" lengthAdjust="spacingAndGlyphs">WeMos.cc</text><text x="615" y="760" font-family="Liberation Sans" font-size="12.5" fill="#c6c6c6" text-anchor="start" textLength="41.7" lengthAdjust="spacingAndGlyphs">D1 mini</text><path d="M624.3 719.4H637.7M631 712.6999999999999V726.1" stroke="#a8c43a" stroke-width="1.3"/><rect x="554.5999999999999" y="664.6" width="23.4" height="12" rx="6" fill="#3cbd88"/><circle cx="566.3" cy="670.6" r="2.4" fill="#2a2a2a"/><rect x="701.5" y="664.6" width="23.4" height="12" rx="6" fill="#3cbd88"/><circle cx="713.2" cy="670.6" r="2.4" fill="#2a2a2a"/><text x="574" y="673.1" font-family="Liberation Sans" font-size="7" fill="#d8d8d8" text-anchor="start" >RST</text><text x="706" y="673.1" font-family="Liberation Sans" font-size="7" fill="#d8d8d8" text-anchor="end" >TX</text><rect x="554.5999999999999" y="680.8" width="23.4" height="12" rx="6" fill="#3cbd88"/><circle cx="566.3" cy="686.8" r="2.4" fill="#2a2a2a"/><rect x="701.5" y="680.8" width="23.4" height="12" rx="6" fill="#3cbd88"/><circle cx="713.2" cy="686.8" r="2.4" fill="#2a2a2a"/><text x="574" y="689.3" font-family="Liberation Sans" font-size="7" fill="#d8d8d8" text-anchor="start" >A0</text><text x="706" y="689.3" font-family="Liberation Sans" font-size="7" fill="#d8d8d8" text-anchor="end" >RX</text><rect x="554.5999999999999" y="697.0" width="23.4" height="12" rx="6" fill="#3cbd88"/><circle cx="566.3" cy="703.0" r="2.4" fill="#2a2a2a"/><rect x="701.5" y="697.0" width="23.4" height="12" rx="6" fill="#3cbd88"/><circle cx="713.2" cy="703.0" r="2.4" fill="#2a2a2a"/><text x="574" y="705.5" font-family="Liberation Sans" font-size="7" fill="#d8d8d8" text-anchor="start" >D0</text><text x="706" y="705.5" font-family="Liberation Sans" font-size="7" fill="#d8d8d8" text-anchor="end" >D1</text><rect x="554.5999999999999" y="713.2" width="23.4" height="12" rx="6" fill="#3cbd88"/><circle cx="566.3" cy="719.2" r="2.4" fill="#2a2a2a"/><rect x="701.5" y="713.2" width="23.4" height="12" rx="6" fill="#3cbd88"/><circle cx="713.2" cy="719.2" r="2.4" fill="#2a2a2a"/><text x="574" y="721.7" font-family="Liberation Sans" font-size="7" fill="#d8d8d8" text-anchor="start" >D5</text><text x="706" y="721.7" font-family="Liberation Sans" font-size="7" fill="#d8d8d8" text-anchor="end" >D2</text><rect x="554.5999999999999" y="729.5" width="23.4" height="12" rx="6" fill="#3cbd88"/><circle cx="566.3" cy="735.5" r="2.4" fill="#2a2a2a"/><rect x="701.5" y="729.5" width="23.4" height="12" rx="6" fill="#3cbd88"/><circle cx="713.2" cy="735.5" r="2.4" fill="#2a2a2a"/><text x="574" y="738.0" font-family="Liberation Sans" font-size="7" fill="#d8d8d8" text-anchor="start" >D6</text><text x="706" y="738.0" font-family="Liberation Sans" font-size="7" fill="#d8d8d8" text-anchor="end" >D3</text><rect x="554.5999999999999" y="745.9" width="23.4" height="12" rx="6" fill="#3cbd88"/><circle cx="566.3" cy="751.9" r="2.4" fill="#2a2a2a"/><rect x="701.5" y="745.9" width="23.4" height="12" rx="6" fill="#3cbd88"/><circle cx="713.2" cy="751.9" r="2.4" fill="#2a2a2a"/><text x="574" y="754.4" font-family="Liberation Sans" font-size="7" fill="#d8d8d8" text-anchor="start" >D7</text><text x="706" y="754.4" font-family="Liberation Sans" font-size="7" fill="#d8d8d8" text-anchor="end" >D4</text><rect x="554.5999999999999" y="762.1" width="23.4" height="12" rx="6" fill="#3cbd88"/><circle cx="566.3" cy="768.1" r="2.4" fill="#2a2a2a"/><rect x="701.5" y="762.1" width="23.4" height="12" rx="6" fill="#3cbd88"/><circle cx="713.2" cy="768.1" r="2.4" fill="#2a2a2a"/><text x="574" y="770.6" font-family="Liberation Sans" font-size="7" fill="#d8d8d8" text-anchor="start" >D8</text><text x="706" y="770.6" font-family="Liberation Sans" font-size="7" fill="#d8d8d8" text-anchor="end" >GND</text><rect x="554.5999999999999" y="778.5" width="23.4" height="12" rx="6" fill="#3cbd88"/><circle cx="566.3" cy="784.5" r="2.4" fill="#2a2a2a"/><rect x="701.5" y="778.5" width="23.4" height="12" rx="6" fill="#3cbd88"/><circle cx="713.2" cy="784.5" r="2.4" fill="#2a2a2a"/><text x="574" y="787.0" font-family="Liberation Sans" font-size="7" fill="#d8d8d8" text-anchor="start" >3V3</text><text x="706" y="787.0" font-family="Liberation Sans" font-size="7" fill="#d8d8d8" text-anchor="end" >5V</text><rect x="565.5" y="800.5" width="26" height="33.5" fill="none" stroke="#c6c6c6" stroke-width="1.2"/><rect x="567.5" y="802.5" width="22" height="29.5" fill="none" stroke="#c6c6c6" stroke-width="1"/><text x="578.5" y="815.5" font-family="Liberation Sans" font-size="5" fill="#aaa" text-anchor="middle" >RESET</text><text x="578.5" y="821" font-family="Liberation Sans" font-size="5" fill="#aaa" text-anchor="middle" >SWITCH</text><rect x="614.7" y="808.5" width="49.6" height="33.6" fill="none" stroke="#c6c6c6" stroke-width="1.2"/><rect x="616.3" y="810.1" width="46.4" height="30.4" fill="none" stroke="#c6c6c6" stroke-width="1"/><text x="639.5" y="824.8" font-family="Liberation Sans" font-size="9.5" fill="#c6c6c6" text-anchor="middle" >USB</text><text x="639.5" y="834.2" font-family="Liberation Sans" font-size="9.5" fill="#c6c6c6" text-anchor="middle" textLength="29" lengthAdjust="spacingAndGlyphs">MICRO</text><text x="661" y="834.2" font-family="Liberation Sans" font-size="12.5" fill="#c6c6c6" text-anchor="start" textLength="51.7" lengthAdjust="spacingAndGlyphs">WEMOS1</text><path d="M709.0 832.5H716.0M712.5 829.0V836.0" stroke="#9a9a9a" stroke-width="1"/><path d="M552.7 548.6L671.8 597.5" stroke="#c5bf35" stroke-width="1.15"/><path d="M642.3 548.6L517.2 597.5" stroke="#c5bf35" stroke-width="1.15"/><path d="M628.5 548.6L696.2 597.1" stroke="#c5bf35" stroke-width="1.15"/><path d="M718.2 548.6L525.2 825.5" stroke="#c5bf35" stroke-width="1.15"/><path d="M713.5 597.1L713.2 768.1" stroke="#c5bf35" stroke-width="1.15"/><path d="M713.2 768.1L542.5 825.5" stroke="#c5bf35" stroke-width="1.15"/><path d="M517.2 597.5L566.3 735.5" stroke="#c5bf35" stroke-width="1.15"/><path d="M533.4 597.5L566.3 719.2" stroke="#c5bf35" stroke-width="1.15"/><path d="M549.7 597.5L566.3 703.0" stroke="#c5bf35" stroke-width="1.15"/><path d="M566.1 597.5L566.3 686.8" stroke="#c5bf35" stroke-width="1.15"/><path d="M582.4 597.5L566.3 670.6" stroke="#c5bf35" stroke-width="1.15"/><path d="M607 597.5L713.2 670.6" stroke="#c5bf35" stroke-width="1.15"/><path d="M622.9 597.5L713.2 686.8" stroke="#c5bf35" stroke-width="1.15"/><path d="M639.5 597.5L713.2 703.0" stroke="#c5bf35" stroke-width="1.15"/><path d="M655.6 597.5L713.2 719.2" stroke="#c5bf35" stroke-width="1.15"/><path d="M671.8 597.5L713.2 735.5" stroke="#c5bf35" stroke-width="1.15"/></svg>
<div class="a" style="left:1046px;top:910px;width:267px;height:26px;background:#1c1c1c"></div>
<div class="a" style="left:1047px;top:911px;width:265px;height:24px;background:#f1f1f1"></div>
<div class="a" style="left:1255px;top:911px;width:26px;height:24px;background:#0a8fd6"></div>
<svg class="a" style="left:1047px;top:911px" width="265" height="24" viewBox="1047 911 265 24">
<circle cx="1057.9" cy="922.9" r="7" fill="#1a88e0"/><rect x="1056.8" y="920.8" width="2.3" height="6.5" fill="#fff"/><circle cx="1057.95" cy="918.3" r="1.3" fill="#fff"/>
<path d="M1076.3 922.8C1080 917.5 1088.5 917.5 1092.2 922.8C1088.5 928 1080 928 1076.3 922.8Z" fill="none" stroke="#666" stroke-width="1.1"/><circle cx="1084.2" cy="922.8" r="2.9" fill="#777"/>
<g fill="#e0e0e0" stroke="#666" stroke-width="1.1"><circle cx="1108.4" cy="921.5" r="6.1"/><circle cx="1134.4" cy="921.5" r="6.1"/><circle cx="1160.3" cy="921.5" r="6.1"/></g>
<path d="M1112.8 926L1117.5 930.5M1138.8 926L1143.5 930.5M1164.7 926L1169.4 930.5" stroke="#8a6a3a" stroke-width="1.7"/>
<path d="M1105 921.5H1111.8M1108.4 918.1V924.9M1131 921.5H1137.8" stroke="#555" stroke-width="1.1"/>
<rect x="1157.3" y="919.5" width="6" height="4" fill="#fff" stroke="#555" stroke-width="1"/>
<path d="M1183.5 915V930M1187.5 915V930M1191.5 915V930M1180 918.5H1195M1180 922.5H1195M1180 926.5H1195" stroke="#666" stroke-width="1.1"/>
<path d="M1206 922.4H1211M1216 922.4H1221M1213.5 915V920M1213.5 925V930" stroke="#555" stroke-width="1"/><rect x="1212.3" y="921.2" width="2.4" height="2.4" fill="#555"/>
<circle cx="1240" cy="923" r="7.8" fill="#ee2b2b"/><rect x="1235" y="921.5" width="10" height="3" fill="#fff"/>
<rect x="1258.7" y="915" width="13.5" height="10.5" fill="none" stroke="#6fdc6a" stroke-width="1" stroke-dasharray="1.8 1.3"/>
<path d="M1268 922V931L1270 929L1271.5 932L1272.7 931.5L1271.3 928.5H1274Z" fill="#fff"/>
<path d="M1287.5 915V930" stroke="#666" stroke-width="1"/>
<path d="M1284.5 923.3H1296" stroke="#8cc6f0" stroke-width="2"/>
<path d="M1287.5 920.5H1296A2.9 2.9 0 0 1 1296 926.2H1287.5" fill="none" stroke="#666" stroke-width="1"/>
<path d="M1302 920H1307.5L1304.75 923.5Z" fill="#333"/>
</svg>
<div class="a" style="left:1886px;top:85px;width:26px;height:138px;border:1px solid #cdcdcd;border-bottom:none"></div>
<div class="a" style="left:1886px;top:222px;width:26px;height:207px;border:1px solid #cdcdcd"></div>
<svg class="a" style="left:1890px;top:88px" width="18" height="150" viewBox="1890 88 18 150"><path d="M1894.5 94L1899.3 91V97ZM1899 94L1903.8 91V97Z" fill="#222"/><path d="M1894.6 231L1899.3 228.2V233.8ZM1899.3 231L1904 228.2V233.8Z" fill="#222"/></svg>
<div class="t" style="left:1894px;top:168.8px;font-size:10.4px;color:#333;transform:rotate(-90deg) scaleX(0.9482);transform-origin:0 0">INSPECTOR</div>
<div class="t" style="left:1893.8px;top:358.8px;font-size:10.4px;color:#333;transform:rotate(-90deg) scaleX(0.9422);transform-origin:0 0">FILTRO DE SELECCIÓN</div>
<div class="a" style="left:1912px;top:223px;width:2px;height:178px;background:#9a9a9a;border-left:1px solid #fff"></div>
<div class="a" style="left:477px;top:955px;width:1px;height:30px;background:#c8c8c8"></div>
<div class="a" style="left:1882px;top:954px;width:1px;height:31px;background:#c8c8c8"></div>
<div class="t" style="left:488.30px;top:967.68px;font-size:11.9px;color:#111;font-family:'Liberation Mono';transform:scaleX(0.9821);transform-origin:0 0;">Haga clic con el botón izquierdo y arrastre para definir el grupo</div>
<div class="a" style="left:0;top:984px;width:1914px;height:1px;background:#fafafa"></div><div class="a" style="left:0;top:985px;width:1914px;height:1px;background:#0b1630"></div>
</body></html>
